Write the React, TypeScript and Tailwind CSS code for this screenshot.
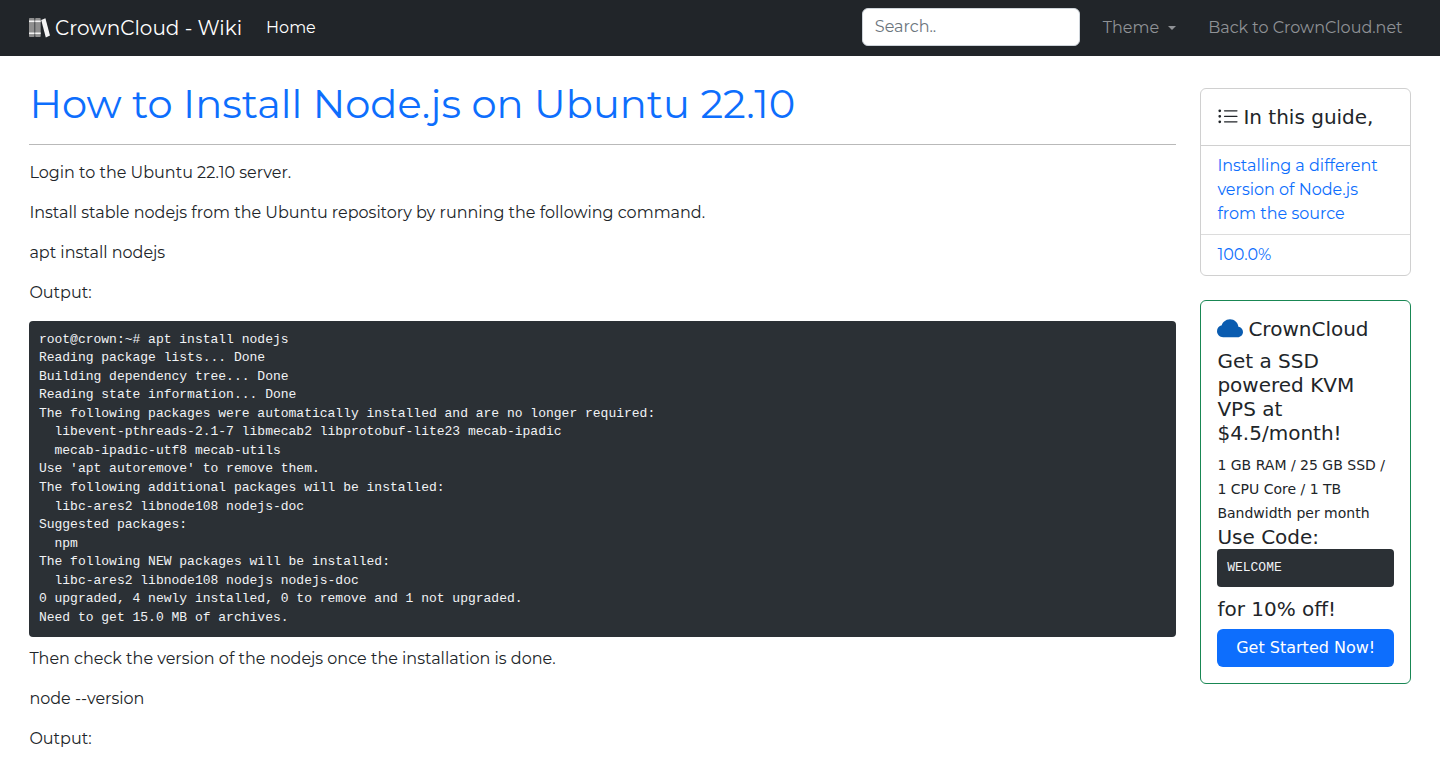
const sans = "font-['Montserrat','Inter','Noto_Sans',sans-serif]";

function BooksIcon() {
  return (
    <svg width="21" height="21" viewBox="0 0 21 21" className="shrink-0 -translate-y-px">
      <rect x="0" y="1" width="5.5" height="19" rx="0.8" fill="#8f8f8f" />
      <rect x="6.2" y="1" width="5.5" height="19" rx="0.8" fill="#8f8f8f" />
      <rect x="0" y="3.5" width="5.5" height="1.6" fill="#f2f2f2" />
      <rect x="0" y="15.5" width="5.5" height="1.6" fill="#f2f2f2" />
      <rect x="6.2" y="3.5" width="5.5" height="1.6" fill="#f2f2f2" />
      <rect x="6.2" y="15.5" width="5.5" height="1.6" fill="#f2f2f2" />
      <path d="M12.2 3 L16.4 1.2 L21 18.6 L16.8 20.4 Z" fill="#f4f4f4" />
    </svg>
  );
}

function ListIcon() {
  return (
    <svg width="22" height="22" viewBox="0 0 16 16" fill="#212529" className="shrink-0">
      <path fillRule="evenodd" d="M5 11.5a.5.5 0 0 1 .5-.5h9a.5.5 0 0 1 0 1h-9a.5.5 0 0 1-.5-.5zm0-4a.5.5 0 0 1 .5-.5h9a.5.5 0 0 1 0 1h-9a.5.5 0 0 1-.5-.5zm0-4a.5.5 0 0 1 .5-.5h9a.5.5 0 0 1 0 1h-9a.5.5 0 0 1-.5-.5zm-3 1a1 1 0 1 0 0-2 1 1 0 0 0 0 2zm0 4a1 1 0 1 0 0-2 1 1 0 0 0 0 2zm0 4a1 1 0 1 0 0-2 1 1 0 0 0 0 2z" />
    </svg>
  );
}

function CloudIcon() {
  return (
    <svg width="26" height="26" viewBox="0 0 16 16" fill="#0a5cb0" className="shrink-0 -my-px">
      <path d="M4.406 3.342A5.53 5.53 0 0 1 8 2c2.69 0 4.923 2 5.166 4.579C14.758 6.804 16 8.137 16 9.773 16 11.569 14.502 13 12.687 13H3.781C1.708 13 0 11.366 0 9.318c0-1.763 1.266-3.223 2.942-3.593.143-.863.698-1.723 1.464-2.383z" />
    </svg>
  );
}

const terminal = `root@crown:~# apt install nodejs
Reading package lists... Done
Building dependency tree... Done
Reading state information... Done
The following packages were automatically installed and are no longer required:
  libevent-pthreads-2.1-7 libmecab2 libprotobuf-lite23 mecab-ipadic
  mecab-ipadic-utf8 mecab-utils
Use 'apt autoremove' to remove them.
The following additional packages will be installed:
  libc-ares2 libnode108 nodejs-doc
Suggested packages:
  npm
The following NEW packages will be installed:
  libc-ares2 libnode108 nodejs nodejs-doc
0 upgraded, 4 newly installed, 0 to remove and 1 not upgraded.
Need to get 15.0 MB of archives.`;

export default function App() {
  return (
    <div className="h-[761px] overflow-hidden bg-white text-[#212529] font-['DejaVu_Sans',sans-serif]">
      {/* Navbar */}
      <nav className={`h-14 bg-[#212529] flex items-center pl-[29px] pr-[37.4px] ${sans}`}>
        <BooksIcon />
        <a className="ml-[5px] text-[20px] text-white">CrownCloud - Wiki</a>
        <a className="ml-6 text-white">Home</a>
        <input
          placeholder="Search.."
          className="ml-auto mb-[2px] w-[218px] h-[38px] rounded-md border border-[#ced4da] bg-white px-3 pb-[2px] text-base placeholder:text-[#6c757d]"
        />
        <a className="ml-[23px] text-[#8f9296] flex items-center">
          Theme
          <span className="ml-[9px] border-x-[4px] border-t-[4.8px] border-x-transparent border-t-[#8f9296]" />
        </a>
        <a className="ml-8 text-[#8f9296]">Back to CrownCloud.net</a>
      </nav>

      <div className="flex gap-6 pl-[29.4px] pr-[29px]">
        {/* Article */}
        <main className={`flex-1 min-w-0 pt-6 ${sans}`}>
          <h1 className="text-[40px] leading-[48px] text-[#0d6efd]">How to Install Node.js on Ubuntu 22.10</h1>
          <hr className="mt-4 mb-4 border-[#b9b9b9]" />
          <p className="mb-4 leading-6">Login to the Ubuntu 22.10 server.</p>
          <p className="mb-4 leading-6">Install stable nodejs from the Ubuntu repository by running the following command.</p>
          <p className="mb-4 leading-6">apt install nodejs</p>
          <p className="mb-4 leading-6">Output:</p>
          <pre className="mb-[10px] rounded bg-[#2b3035] p-[9.75px] pl-[9.5px] text-[#f1f3f5] text-[13px] leading-[18.525px] font-['Liberation_Mono',monospace]">{terminal}</pre>
          <p className="mb-4 leading-6">Then check the version of the nodejs once the installation is done.</p>
          <p className="mb-4 leading-6">node --version</p>
          <p className="mb-4 leading-6">Output:</p>
        </main>

        {/* Sidebar */}
        <aside className="w-[210.6px] shrink-0 pt-8">
          <div className="rounded-md border border-[#d0d0d0]">
            <div className="flex items-center gap-1 h-[57px] px-4 text-[20px] border-b border-[#d0d0d0]">
              <ListIcon />
              <span>In this guide,</span>
            </div>
            <a className={`block px-4 py-2 leading-6 text-[#0d6efd] border-b border-[#dcdcdc] ${sans}`}>
              Installing a different version of Node.js from the source
            </a>
            <a className={`block px-4 py-2 leading-6 text-[#0d6efd] ${sans}`}>100.0%</a>
          </div>

          <div className="mt-6 rounded-md border border-[#198754] p-4">
            <div className="flex items-center gap-[5px] text-[20px] leading-6">
              <CloudIcon />
              <span>CrownCloud</span>
            </div>
            <p className="mt-2 text-[20px] leading-6">Get a SSD powered KVM VPS at $4.5/month!</p>
            <p className="mt-2 text-sm leading-6">1 GB RAM / 25 GB SSD / 1 CPU Core / 1 TB Bandwidth per month</p>
            <p className="text-[20px] leading-6">Use Code:</p>
            <pre className="rounded bg-[#2b3035] p-[9.75px] text-[#f1f3f5] text-[13px] leading-[18.525px] font-['Liberation_Mono',monospace]">WELCOME</pre>
            <p className="mt-[10px] text-[20px] leading-6">for 10% off!</p>
            <a className="mt-2 flex h-[38px] items-center justify-center rounded-md bg-[#0d6efd] text-white">Get Started Now!</a>
          </div>
        </aside>
      </div>
    </div>
  );
}
